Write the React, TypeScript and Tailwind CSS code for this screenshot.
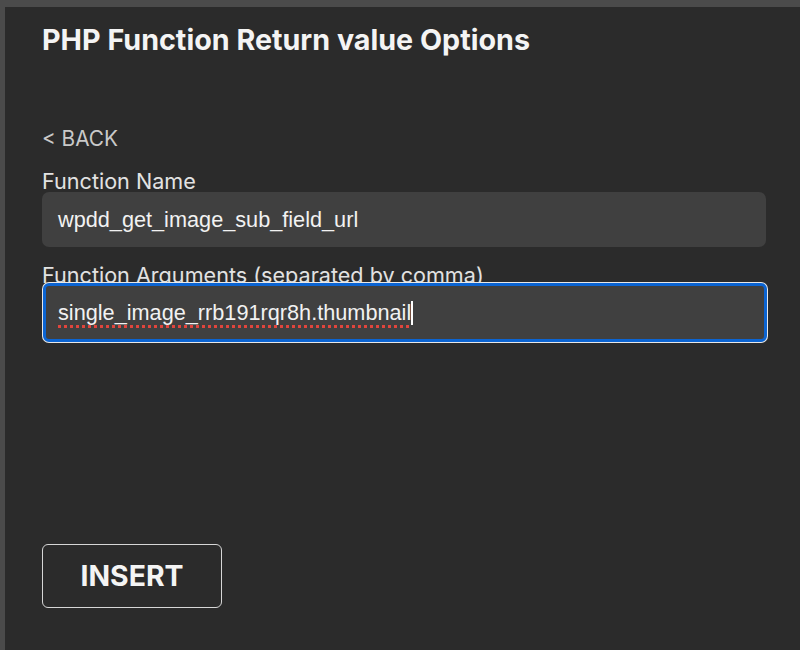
export default function App() {
  return (
    <div className="w-[800px] h-[650px] bg-[#4b4b4b] pt-[7px] pl-[5px]">
      <div className="h-full bg-[#2b2b2b] pl-[37px] pt-[16px] flex flex-col items-start font-['Inter',sans-serif]">
        <h1 className="text-[28.7px] leading-[34px] font-bold text-[#f4f4f4]">
          PHP Function Return value Options
        </h1>

        <button className="mt-[70px] text-[20.8px] leading-[24px] text-[#c9c9c9]">&lt; BACK</button>

        <label className="mt-[20px] text-[21.6px] leading-[21px] text-[#e2e2e2]">Function Name</label>
        <div className="w-[724px] h-[55px] rounded-[7px] bg-[#404040] pl-[16px] flex items-center">
          <span className="text-[21.7px] leading-[24px] text-[#f2f2f2] font-['Liberation_Sans',sans-serif]">
            wpdd_get_image_sub_field_url
          </span>
        </div>

        <label className="mt-[18px] text-[21.6px] leading-[21px] text-[#e2e2e2]">
          Function Arguments (separated by comma)
        </label>
        <div className="mt-[-3px] ml-[1px] w-[724px] h-[59px] rounded-[6px] bg-[#404040] border-[3px] border-[#0b64d2] shadow-[0_0_0_1px_#e8e8e8] pl-[12px] flex items-center">
          <span className="text-[21.7px] leading-[24px] text-[#f2f2f2] font-['Liberation_Sans',sans-serif] underline decoration-dotted decoration-[#e0453d] decoration-[3px] underline-offset-[5px]">
            single_image_rrb191rqr8h.thumbnail
          </span>
          <span className="w-[1.5px] h-[24px] bg-white" />
        </div>

        <button className="mt-[202px] w-[180px] h-[64px] rounded-[6px] border-[1.5px] border-[#d6d6d6] text-[28.4px] font-bold text-[#f4f4f4] flex items-center justify-center">
          INSERT
        </button>
      </div>
    </div>
  );
}
